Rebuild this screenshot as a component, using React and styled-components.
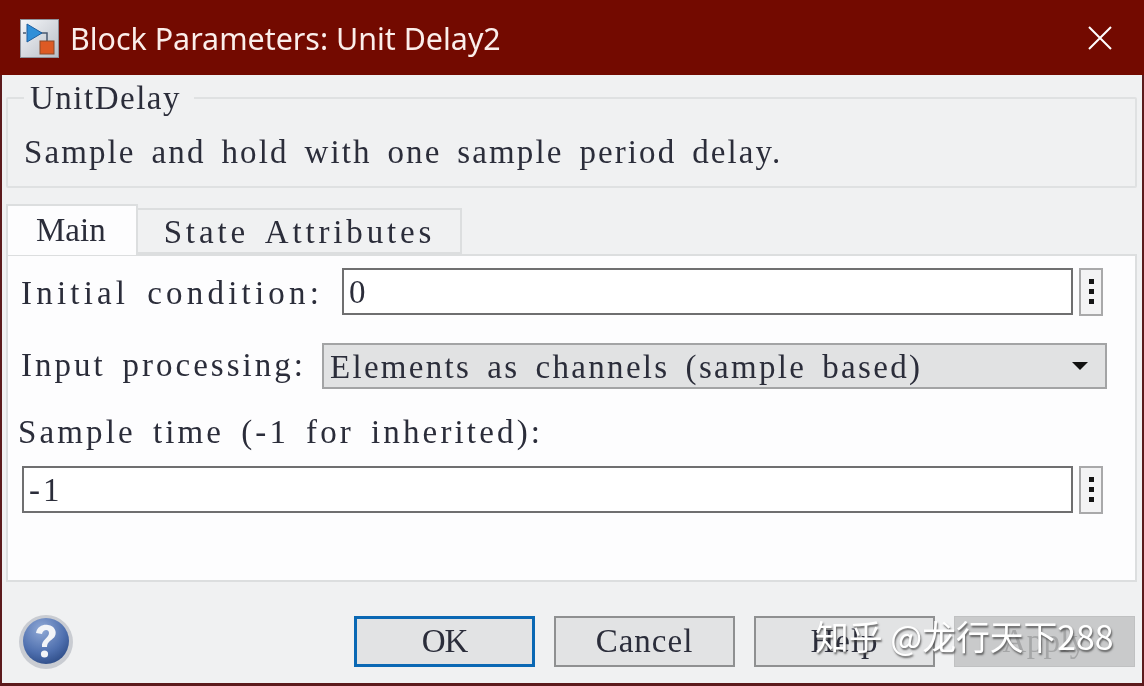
import React from "react";
import styled, { createGlobalStyle } from "styled-components";

const Global = createGlobalStyle`
  html, body { margin: 0; padding: 0; background: #f0f0f0; }
  #root { width: 1144px; height: 686px; overflow: hidden; }
`;

const Window = styled.div`
  position: relative;
  box-sizing: border-box;
  width: 1144px;
  height: 686px;
  display: flex;
  flex-direction: column;
  background: #f0f1f2;
  border: solid #5c1a1c;
  border-width: 0 2px 3px 2px;
  font-family: "Liberation Serif", "Times New Roman", serif;
  font-size: 33px;
  word-spacing: 5.6px;
  color: #2b2d3a;
  filter: blur(0.45px);
`;

const Spaced = styled.span`
  letter-spacing: ${(p) => p.$track}px;
  white-space: pre;
`;

const TitleBar = styled.div`
  flex: none;
  box-sizing: border-box;
  height: 75px;
  margin: 0 -2px;
  padding: 1px 31px 0 20px;
  display: flex;
  align-items: center;
  background: #730a00;
  color: #fbeeea;
  font-family: "Noto Sans", "Open Sans", sans-serif;
  font-size: 30.4px;
  word-spacing: 0;
`;

const TitleText = styled.span`
  margin-left: 11px;
  flex: 1;
`;

const GroupBox = styled.fieldset`
  flex: none;
  box-sizing: border-box;
  height: 107px;
  margin: 6px 5px 0 4px;
  padding: 0 0 0 16px;
  border: 2px solid #dfe1e2;
  border-radius: 2px;
  min-width: 0;
`;

const Legend = styled.legend`
  margin-left: 0;
  padding: 0 13px 0 6px;
  line-height: 34px;
`;

const Description = styled.div`
  line-height: 36px;
  margin-top: 19px;
`;

const TabStrip = styled.div`
  flex: none;
  display: flex;
  align-items: flex-end;
  height: 50px;
  margin: 16px 0 0 4px;
`;

const Tab = styled.div`
  box-sizing: border-box;
  height: ${(p) => (p.$active ? "51px" : "46px")};
  padding: ${(p) => (p.$active ? "0" : "3px")} ${(p) => (p.$active ? "30px" : "25px")} 0 ${(p) => (p.$active ? "28px" : "26px")};
  display: flex;
  align-items: center;
  background: ${(p) => (p.$active ? "#fdfdfe" : "#f0f1f2")};
  border: 2px solid #dcdedf;
  border-bottom: ${(p) => (p.$active ? "none" : "2px solid #dcdedf")};
  border-left: ${(p) => (p.$active ? "2px solid #dcdedf" : "none")};
  margin-bottom: ${(p) => (p.$active ? "-1px" : "0")};
  position: relative;
  z-index: ${(p) => (p.$active ? 1 : 0)};
`;

const Panel = styled.div`
  flex: none;
  box-sizing: border-box;
  height: 328px;
  margin: 0 5px 0 4px;
  padding: 11px 32px 0 14px;
  background: #fdfdfe;
  border: 2px solid #dcdedf;
  display: flex;
  flex-direction: column;
`;

const Row = styled.div`
  display: flex;
  align-items: center;
  gap: 6px;
  height: 49px;
  margin-top: ${(p) => p.$gap || 0}px;
`;

const RowLabel = styled.label`
  box-sizing: border-box;
  width: ${(p) => p.$width}px;
  flex: none;
  margin-left: -1px;
  padding-top: ${(p) => p.$drop || 0}px;
`;

const TextField = styled.div`
  box-sizing: border-box;
  flex: 1;
  height: 47px;
  padding: 2px 0 0 5px;
  display: flex;
  align-items: center;
  background: #fff;
  border: 2px solid #6f6f70;
`;

const DotsButton = styled.div`
  box-sizing: border-box;
  flex: none;
  width: 24px;
  height: 48px;
  display: flex;
  flex-direction: column;
  align-items: center;
  justify-content: center;
  gap: 5px;
  background: #f3f3f4;
  border: 2px solid #a9a9aa;
`;

const Dot = styled.span`
  width: 5px;
  height: 5px;
  background: #151515;
`;

const Select = styled.div`
  box-sizing: border-box;
  flex: 1;
  height: 46px;
  margin-right: -4px;
  padding: 3px 17px 0 6px;
  display: flex;
  align-items: center;
  justify-content: space-between;
  background: #e1e2e3;
  border: 2px solid #a3a4a5;
`;

const Caret = styled.span`
  width: 0;
  height: 0;
  border-left: 8px solid transparent;
  border-right: 8px solid transparent;
  border-top: 8px solid #111;
  margin-top: -3px;
`;

const SampleLabel = styled.label`
  display: block;
  margin: 23px 0 0 -4px;
  line-height: 38px;
`;

const Footer = styled.div`
  flex: none;
  height: 51px;
  margin-top: 34px;
  display: flex;
  align-items: center;
  justify-content: space-between;
  padding: 0 7px 0 16px;
`;

const Buttons = styled.div`
  display: flex;
  gap: 19px;
`;

const Button = styled.div`
  box-sizing: border-box;
  width: 181px;
  height: 51px;
  display: flex;
  align-items: center;
  justify-content: center;
  background: ${(p) => (p.$disabled ? "#c9cacb" : "#e2e3e4")};
  color: ${(p) => (p.$disabled ? "#a5a6a7" : "#2b2d3a")};
  border: ${(p) => (p.$default ? "3px solid #0a68b4" : p.$disabled ? "1px solid #c0c1c2" : "2px solid #8f9091")};
`;

const Watermark = styled.div`
  position: absolute;
  left: 813px;
  top: 613px;
  color: #fff;
  font-family: "Noto Sans CJK SC", "Noto Sans", sans-serif;
  font-size: 33.8px;
  line-height: 46px;
  word-spacing: 0;
  white-space: pre;
  text-shadow: 1px 2px 2px rgba(60, 60, 60, 0.75);
`;

const BlockIcon = () => (
  <svg width="39" height="39" viewBox="0 0 39 39" style={{ flex: "none" }}>
    <defs>
      <linearGradient id="bg" x1="0" y1="0" x2="1" y2="1">
        <stop offset="0" stopColor="#f4f6f9" />
        <stop offset="1" stopColor="#b9bec6" />
      </linearGradient>
    </defs>
    <rect x="0.5" y="0.5" width="38" height="38" fill="url(#bg)" stroke="#8e929a" />
    <path d="M6 14 H3 M20 14 H27 V22" stroke="#4a5a70" strokeWidth="1.5" fill="none" />
    <path d="M7 5 L22 14 L7 23 Z" fill="#2f8fd8" stroke="#1f5f9f" />
    <rect x="20" y="22" width="14" height="13" fill="#dd5a24" stroke="#8a4a2a" />
  </svg>
);

const HelpIcon = () => (
  <svg width="56" height="56" viewBox="0 0 56 56" style={{ flex: "none" }}>
    <defs>
      <radialGradient id="ball" cx="0.4" cy="0.25" r="0.85">
        <stop offset="0" stopColor="#90a9d6" />
        <stop offset="0.6" stopColor="#4f70af" />
        <stop offset="1" stopColor="#27457f" />
      </radialGradient>
    </defs>
    <circle cx="28" cy="28" r="27" fill="#c9ccd2" />
    <circle cx="28" cy="27" r="23" fill="url(#ball)" />
    <path
      d="M18 19 C19 12 26 10 30 11 C37 12 39 18 37 22 C35 26 29 27 29 33 H24 C23 26 31 24 31 19 C31 15 25 15 24 20 Z"
      fill="#f2f4f8"
    />
    <circle cx="26.5" cy="40" r="3.6" fill="#f2f4f8" />
  </svg>
);

const Dots = () => (
  <DotsButton>
    <Dot />
    <Dot />
    <Dot />
  </DotsButton>
);

export default function App() {
  return (
    <Window>
      <Global />
      <TitleBar>
        <BlockIcon />
        <TitleText>Block Parameters: Unit Delay2</TitleText>
        <svg width="26" height="26" viewBox="0 0 26 26">
          <path d="M2 2 L24 24 M24 2 L2 24" stroke="#fff" strokeWidth="2" />
        </svg>
      </TitleBar>
      <GroupBox>
        <Legend>
          <Spaced $track={1.5}>UnitDelay</Spaced>
        </Legend>
        <Description>
          <Spaced $track={2.1}>Sample and hold with one sample period delay.</Spaced>
        </Description>
      </GroupBox>
      <TabStrip>
        <Tab $active>
          <Spaced $track={0}>Main</Spaced>
        </Tab>
        <Tab>
          <Spaced $track={3.85}>State Attributes</Spaced>
        </Tab>
      </TabStrip>
      <Panel>
        <Row>
          <RowLabel $width={315} $drop={4}>
            <Spaced $track={4.2}>Initial condition:</Spaced>
          </RowLabel>
          <TextField>0</TextField>
          <Dots />
        </Row>
        <Row $gap={25}>
          <RowLabel $width={295}>
            <Spaced $track={3}>Input processing:</Spaced>
          </RowLabel>
          <Select>
            <Spaced $track={2.3}>Elements as channels (sample based)</Spaced>
            <Caret />
          </Select>
        </Row>
        <SampleLabel>
          <Spaced $track={3.15}>Sample time (-1 for inherited):</Spaced>
        </SampleLabel>
        <Row $gap={14}>
          <TextField>
            <Spaced $track={3}>-1</Spaced>
          </TextField>
          <Dots />
        </Row>
      </Panel>
      <Footer>
        <HelpIcon />
        <Buttons>
          <Button $default>
            <Spaced $track={-1}>OK</Spaced>
          </Button>
          <Button>
            <Spaced $track={1}>Cancel</Spaced>
          </Button>
          <Button>
            <Spaced $track={1}>Help</Spaced>
          </Button>
          <Button $disabled>
            <Spaced $track={0.3}>Apply</Spaced>
          </Button>
        </Buttons>
      </Footer>
      <Watermark>知乎 @龙行天下288</Watermark>
    </Window>
  );
}
